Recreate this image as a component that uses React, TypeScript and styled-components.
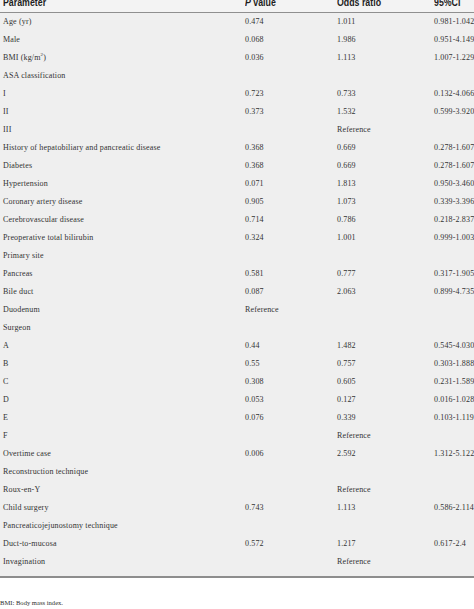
import React from "react";
import styled, { createGlobalStyle } from "styled-components";

const Global = createGlobalStyle`
  html, body { margin: 0; padding: 0; background: #ffffff; }
  body { overflow: hidden; width: 474px; height: 609px; }
  #root { width: 474px; overflow: hidden; }
`;

const Page = styled.div`
  width: 474px;
  height: 609px;
  overflow: hidden;
  display: flex;
  flex-direction: column;
`;

const Table = styled.div`
  width: 540px;
  background: #efefef;
  border-bottom: 2.5px solid #8d8d8d;
  padding-bottom: 5px;
`;

const Grid = styled.div`
  display: grid;
  grid-template-columns: 242px 92px 97px 106px;
  padding-left: 3px;
`;

const HeadRow = styled(Grid)`
  height: 12px;
  background: #f3f3f3;
  border-bottom: 1px solid #8f8f8f;
  overflow: hidden;
`;

const HeadCell = styled.div`
  font-family: "Liberation Sans", Arial, sans-serif;
  font-weight: bold;
  font-size: 11px;
  line-height: 11px;
  color: #1e1e1e;
  margin-top: -3px;
  white-space: nowrap;
  transform: scaleX(0.8);
  transform-origin: left center;
`;

const Row = styled(Grid)`
  height: 18px;
  align-items: center;
`;

const Cell = styled.div`
  font-family: "Liberation Serif", "Times New Roman", serif;
  font-size: 8px;
  letter-spacing: 0.15px;
  line-height: 18px;
  color: #333333;
  white-space: nowrap;
`;

const Foot = styled.div`
  margin-top: 21px;
  font-family: "Liberation Serif", "Times New Roman", serif;
  font-size: 6.6px;
  line-height: 8px;
  color: #2e2e2e;
  white-space: nowrap;
`;

type R = [React.ReactNode, string, string, string];

const rows: R[] = [
  ["Age (yr)", "0.474", "1.011", "0.981-1.042"],
  ["Male", "0.068", "1.986", "0.951-4.149"],
  [<>BMI (kg/m<sup style={{ fontSize: "5px", lineHeight: 0 }}>2</sup>)</>, "0.036", "1.113", "1.007-1.229"],
  ["ASA classification", "", "", ""],
  ["I", "0.723", "0.733", "0.132-4.066"],
  ["II", "0.373", "1.532", "0.599-3.920"],
  ["III", "", "Reference", ""],
  ["History of hepatobiliary and pancreatic disease", "0.368", "0.669", "0.278-1.607"],
  ["Diabetes", "0.368", "0.669", "0.278-1.607"],
  ["Hypertension", "0.071", "1.813", "0.950-3.460"],
  ["Coronary artery disease", "0.905", "1.073", "0.339-3.396"],
  ["Cerebrovascular disease", "0.714", "0.786", "0.218-2.837"],
  ["Preoperative total bilirubin", "0.324", "1.001", "0.999-1.003"],
  ["Primary site", "", "", ""],
  ["Pancreas", "0.581", "0.777", "0.317-1.905"],
  ["Bile duct", "0.087", "2.063", "0.899-4.735"],
  ["Duodenum", "Reference", "", ""],
  ["Surgeon", "", "", ""],
  ["A", "0.44", "1.482", "0.545-4.030"],
  ["B", "0.55", "0.757", "0.303-1.888"],
  ["C", "0.308", "0.605", "0.231-1.589"],
  ["D", "0.053", "0.127", "0.016-1.028"],
  ["E", "0.076", "0.339", "0.103-1.119"],
  ["F", "", "Reference", ""],
  ["Overtime case", "0.006", "2.592", "1.312-5.122"],
  ["Reconstruction technique", "", "", ""],
  ["Roux-en-Y", "", "Reference", ""],
  ["Child surgery", "0.743", "1.113", "0.586-2.114"],
  ["Pancreaticojejunostomy technique", "", "", ""],
  ["Duct-to-mucosa", "0.572", "1.217", "0.617-2.4"],
  ["Invagination", "", "Reference", ""],
];

export default function App() {
  return (
    <Page>
      <Global />
      <Table>
        <HeadRow>
          <HeadCell>Parameter</HeadCell>
          <HeadCell><i>P</i> value</HeadCell>
          <HeadCell>Odds ratio</HeadCell>
          <HeadCell>95%CI</HeadCell>
        </HeadRow>
        {rows.map((r, i) => (
          <Row key={i}>
            <Cell>{r[0]}</Cell>
            <Cell>{r[1]}</Cell>
            <Cell>{r[2]}</Cell>
            <Cell>{r[3]}</Cell>
          </Row>
        ))}
      </Table>
      <Foot>BMI: Body mass index.</Foot>
    </Page>
  );
}
